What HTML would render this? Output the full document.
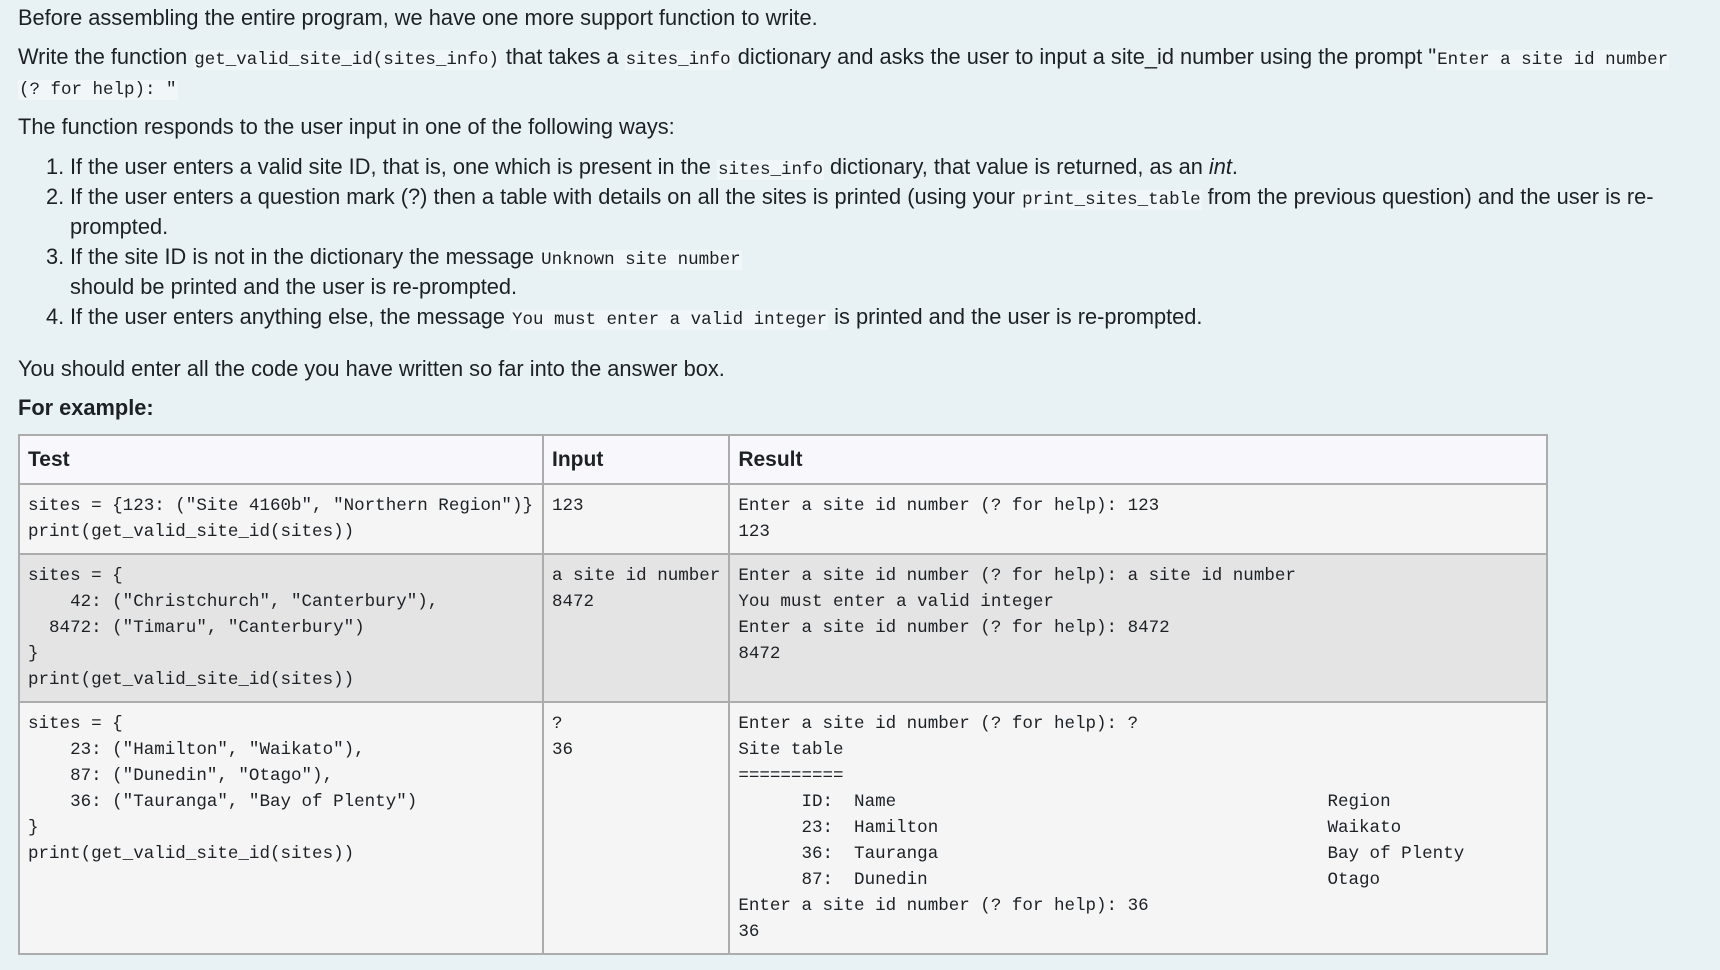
<!DOCTYPE html>
<html><head><meta charset="utf-8"><style>
html,body{margin:0;padding:0;}
body{width:1720px;height:970px;background:#e8f1f4;font-family:"Liberation Sans",Arial,sans-serif;font-size:21.8px;color:#1d2125;overflow:hidden;position:relative;}
.l{position:absolute;left:18px;white-space:nowrap;line-height:30px;}
code,.m{font-family:"Liberation Mono","DejaVu Sans Mono",monospace;font-size:17.5px;}
code{background:#f1f6f8;padding:0 1px;}
.n{position:absolute;left:46px;white-space:nowrap;line-height:30px;}
.n span.t{position:absolute;left:24px;}
table{position:absolute;left:18px;top:434px;border-collapse:collapse;table-layout:fixed;}
td,th{border:2px solid #acacac;vertical-align:top;padding:8px 8px;}
th{background:#f8f8fc;text-align:left;font-weight:bold;font-size:21px;height:35px;line-height:35px;padding:6px 8px;}
td pre{margin:0;font-family:"Liberation Mono","DejaVu Sans Mono",monospace;font-size:17.55px;line-height:26px;}
tr.a td{background:#f5f5f5;}
tr.b td{background:#e4e4e4;}
</style></head><body>
<div class="l" style="top:3px">Before assembling the entire program, we have one more support function to write.</div>
<div class="l" style="top:42px">Write the function <code>get_valid_site_id(sites_info)</code> that takes a <code>sites_info</code> dictionary and asks the user to input a site_id number using the prompt "<code>Enter a site id number</code></div>
<div class="l" style="top:72px"><code>(? for help): "</code></div>
<div class="l" style="top:112px">The function responds to the user input in one of the following ways:</div>
<div class="n" style="top:152px">1.<span class="t">If the user enters a valid site ID, that is, one which is present in the <code>sites_info</code> dictionary, that value is returned, as an <i>int</i>.</span></div>
<div class="n" style="top:182px">2.<span class="t">If the user enters a question mark (?) then a table with details on all the sites is printed (using your <code>print_sites_table</code> from the previous question) and the user is re-</span></div>
<div class="n" style="top:212px"><span class="t">prompted.</span></div>
<div class="n" style="top:242px">3.<span class="t">If the site ID is not in the dictionary the message <code>Unknown site number</code></span></div>
<div class="n" style="top:272px"><span class="t">should be printed and the user is re-prompted.</span></div>
<div class="n" style="top:302px">4.<span class="t">If the user enters anything else, the message <code>You must enter a valid integer</code> is printed and the user is re-prompted.</span></div>
<div class="l" style="top:354px">You should enter all the code you have written so far into the answer box.</div>
<div class="l" style="top:393px;font-weight:bold">For example:</div>
<table>
<colgroup><col style="width:524px"><col style="width:185px"><col style="width:818px"></colgroup>
<tr><th>Test</th><th>Input</th><th>Result</th></tr>
<tr class="a"><td><pre>sites = {123: ("Site 4160b", "Northern Region")}
print(get_valid_site_id(sites))</pre></td><td><pre>123</pre></td><td><pre>Enter a site id number (? for help): 123
123</pre></td></tr>
<tr class="b"><td><pre>sites = {
    42: ("Christchurch", "Canterbury"),
  8472: ("Timaru", "Canterbury")
}
print(get_valid_site_id(sites))</pre></td><td><pre>a site id number
8472</pre></td><td><pre>Enter a site id number (? for help): a site id number
You must enter a valid integer
Enter a site id number (? for help): 8472
8472</pre></td></tr>
<tr class="a"><td><pre>sites = {
    23: ("Hamilton", "Waikato"),
    87: ("Dunedin", "Otago"),
    36: ("Tauranga", "Bay of Plenty")
}
print(get_valid_site_id(sites))</pre></td><td><pre>?
36</pre></td><td><pre>Enter a site id number (? for help): ?
Site table
==========
      ID:  Name                                         Region
      23:  Hamilton                                     Waikato
      36:  Tauranga                                     Bay of Plenty
      87:  Dunedin                                      Otago
Enter a site id number (? for help): 36
36</pre></td></tr>
</table>
</body></html>
